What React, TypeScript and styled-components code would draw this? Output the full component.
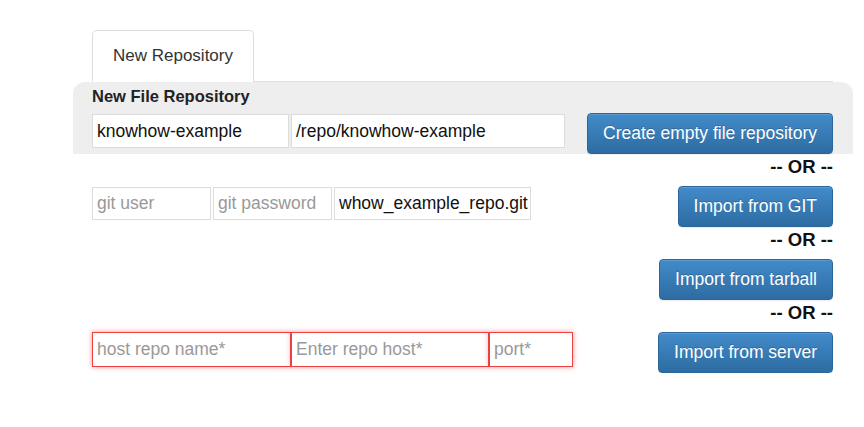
import React from "react";
import { styled, createGlobalStyle } from "styled-components";

const GlobalStyle = createGlobalStyle`
  body {
    margin: 0;
    background: #ffffff;
    font-family: "Liberation Sans", Arial, sans-serif;
    color: #333333;
  }
`;

const App: React.FC = () => {
  return (
    <Page>
      <GlobalStyle />
      <Tabs>
        <Tab>New Repository</Tab>
      </Tabs>
      <Panel>
        <Title>New File Repository</Title>
        <Row>
          <Fields>
            <TextInput $w={197} $h={34} defaultValue="knowhow-example" />
            <TextInput $w={274} $h={34} defaultValue="/repo/knowhow-example" />
          </Fields>
          <Button type="button">Create empty file repository</Button>
        </Row>
      </Panel>
      <Section>
        <Or>-- OR --</Or>
        <Row>
          <Fields>
            <TextInput $w={119} $h={33} placeholder="git user" />
            <TextInput $w={119} $h={33} type="password" placeholder="git password" />
            <TextInput $w={197} $h={33} defaultValue="whow_example_repo.git" />
          </Fields>
          <Button type="button">Import from GIT</Button>
        </Row>
        <Or>-- OR --</Or>
        <Row>
          <Fields />
          <Button type="button">Import from tarball</Button>
        </Row>
        <Or>-- OR --</Or>
        <Row>
          <Fields $tight>
            <TextInput $w={199} $h={35} $invalid placeholder="host repo name*" />
            <TextInput $w={198} $h={35} $invalid placeholder="Enter repo host*" />
            <TextInput $w={84} $h={35} $invalid placeholder="port*" />
          </Fields>
          <Button type="button">Import from server</Button>
        </Row>
      </Section>
    </Page>
  );
};

export default App;

const Page = styled.div`
  width: 780px;
  padding: 30px 0 0 73px;
`;

const Tabs = styled.div`
  display: flex;
  margin: 0 20px 0 19px;
  border-bottom: 1px solid #dddddd;
`;

const Tab = styled.div`
  display: flex;
  align-items: center;
  justify-content: center;
  width: 162px;
  height: 52px;
  margin-bottom: -1px;
  box-sizing: border-box;
  border: 1px solid #dddddd;
  border-bottom-color: transparent;
  border-radius: 5px 5px 0 0;
  background: #ffffff;
  font-size: 17px;
  color: #333333;
`;

const Panel = styled.div`
  background: #eeeeee;
  border-radius: 12px 12px 0 0;
  padding: 4px 20px 0 19px;
`;

const Title = styled.div`
  font-size: 16.5px;
  font-weight: bold;
  line-height: 20px;
  color: #222222;
  margin-bottom: 7px;
`;

const Section = styled.div`
  padding: 0 20px 0 19px;
`;

const Row = styled.div`
  display: flex;
  justify-content: space-between;
  align-items: flex-start;
`;

const Fields = styled.div<{ $tight?: boolean }>`
  display: flex;
  gap: ${(p) => (p.$tight ? 0 : 2)}px;
  padding-top: ${(p) => (p.$tight ? 0 : 1)}px;
`;

const TextInput = styled.input<{ $w: number; $h: number; $invalid?: boolean }>`
  width: ${(p) => p.$w}px;
  height: ${(p) => p.$h}px;
  box-sizing: border-box;
  margin: 0;
  padding: 0 0 0 4px;
  border: 1px solid ${(p) => (p.$invalid ? "#ec4040" : "#dcdcdc")};
  box-shadow: ${(p) => (p.$invalid ? "0 0 5px rgba(240, 70, 70, 0.6)" : "none")};
  border-radius: 0;
  background: #ffffff;
  font-family: "Liberation Sans", Arial, sans-serif;
  font-size: 17.5px;
  color: #111111;
  outline: none;

  &::placeholder {
    color: #999999;
  }
`;

const Button = styled.button`
  box-sizing: border-box;
  height: 41px;
  padding: 0 15px;
  border: 1px solid #2b669a;
  border-radius: 4px;
  background: linear-gradient(to bottom, #428bca 0%, #2d6ca2 100%);
  box-shadow: inset 0 1px 0 rgba(255, 255, 255, 0.15), 0 1px 1px rgba(0, 0, 0, 0.075);
  color: #ffffff;
  text-shadow: 0 -1px 0 rgba(0, 0, 0, 0.2);
  font-family: "Liberation Sans", Arial, sans-serif;
  font-size: 17.5px;
  line-height: 21px;
  white-space: nowrap;
  cursor: pointer;
`;

const Or = styled.div`
  padding: 3px 0 9px;
  line-height: 20px;
  text-align: right;
  font-size: 18.5px;
  font-weight: bold;
  color: #111111;
`;
